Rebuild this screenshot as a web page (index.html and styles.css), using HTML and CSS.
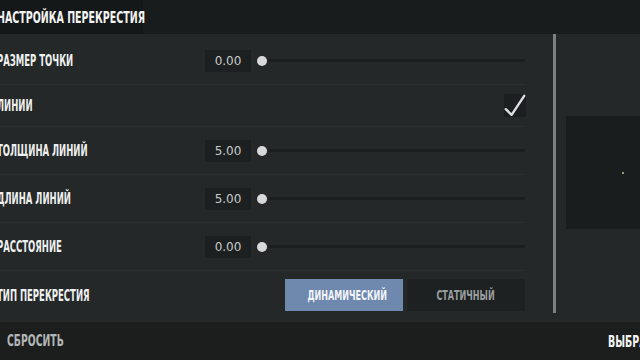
FILE: index.html
```html
<!DOCTYPE html>
<html lang="ru">
<head>
    <meta charset="UTF-8">
    <title>Настройка перекрестия</title>
    <link rel="stylesheet" href="styles.css">
</head>
<body>
    <div id="header">
        <div class="title"><span>НАСТРОЙКА ПЕРЕКРЕСТИЯ</span></div>
    </div>
    <div id="main">
        <div id="settings">
            <div class="row">
                <div class="label">РАЗМЕР ТОЧКИ</div>
                <div class="control">
                    <div class="value">0.00</div>
                    <div class="slider"><span class="thumb"></span><span class="track"></span></div>
                </div>
            </div>
            <div class="row short">
                <div class="label">ЛИНИИ</div>
                <div class="control end">
                    <div class="checkbox">
                        <svg width="22" height="22" viewBox="0 0 22 22">
                            <path d="M1.8 15.2 L7.6 20.8 L20.2 1.8" fill="none" stroke="#dcdee2" stroke-width="2.4" stroke-linecap="round" stroke-linejoin="round"/>
                        </svg>
                    </div>
                </div>
            </div>
            <div class="row">
                <div class="label">ТОЛЩИНА ЛИНИЙ</div>
                <div class="control">
                    <div class="value">5.00</div>
                    <div class="slider"><span class="thumb"></span><span class="track"></span></div>
                </div>
            </div>
            <div class="row">
                <div class="label">ДЛИНА ЛИНИЙ</div>
                <div class="control">
                    <div class="value">5.00</div>
                    <div class="slider"><span class="thumb"></span><span class="track"></span></div>
                </div>
            </div>
            <div class="row">
                <div class="label">РАССТОЯНИЕ</div>
                <div class="control">
                    <div class="value">0.00</div>
                    <div class="slider"><span class="thumb"></span><span class="track"></span></div>
                </div>
            </div>
            <div class="row last">
                <div class="label">ТИП ПЕРЕКРЕСТИЯ</div>
                <div class="control end">
                    <div class="toggle">
                        <div class="option active"><span>ДИНАМИЧЕСКИЙ</span></div>
                        <div class="option"><span>СТАТИЧНЫЙ</span></div>
                    </div>
                </div>
            </div>
        </div>
        <div id="scrollbar"></div>
        <div id="preview">
            <div class="preview-box"><span class="dot"></span></div>
        </div>
    </div>
    <div id="footer">
        <div class="reset">СБРОСИТЬ</div>
        <div class="select">ВЫБРАТЬ</div>
    </div>
</body>
</html>
```

FILE: styles.css
```css
* {
    margin: 0;
    padding: 0;
    box-sizing: border-box;
}

body, html {
    width: 640px;
    height: 360px;
    overflow: hidden;
    background-color: #242828;
    font-family: "DejaVu Sans Condensed", "DejaVu Sans", sans-serif;
    font-weight: bold;
    color: #eceeee;
}

/* the game font is very narrow, so text is squeezed horizontally */
#header {
    height: 34px;
    background-color: #191c1c;
    display: flex;
    align-items: center;
}

.title {
    width: 146px;
    margin-left: -3px;
    height: 34px;
    line-height: 35px;
    background-color: #151818;
    white-space: nowrap;
    font-size: 16px;
    color: #f4f4f4;
}

.title span {
    display: inline-block;
    transform: scaleX(0.66);
    transform-origin: left center;
}

#main {
    display: flex;
    height: 288px;
}

#settings {
    width: 528px;
    margin-left: -3px;
    padding-top: 3px;
}

.row {
    display: flex;
    align-items: center;
    height: 48px;
    border-bottom: 1px solid #2a2e2e;
}

.row.short {
    height: 42px;
}

.row.last {
    border-bottom: none;
}

.label {
    flex: 1;
    white-space: nowrap;
    font-size: 16px;
    color: #eef0f0;
    transform: scaleX(0.59);
    transform-origin: left center;
}

.control {
    width: 320px;
    display: flex;
    align-items: center;
}

.control.end {
    justify-content: flex-end;
}

.value {
    width: 46px;
    height: 22px;
    line-height: 22px;
    text-align: center;
    background-color: #1d2020;
    font-family: "DejaVu Sans", sans-serif;
    font-weight: normal;
    font-size: 12px;
    color: #c8caca;
}

.slider {
    flex: 1;
    display: flex;
    align-items: center;
    padding-left: 6px;
}

.thumb {
    width: 10px;
    height: 10px;
    border-radius: 50%;
    background-color: #d8dada;
}

.track {
    flex: 1;
    height: 3px;
    margin-left: 2px;
    background-color: #1b1e1e;
}

.checkbox {
    width: 22px;
    height: 23px;
    margin-right: -1px;
    background-color: #1c1f1f;
}

.checkbox svg {
    display: block;
    overflow: visible;
}

.toggle {
    display: flex;
    gap: 4px;
}

.option {
    width: 118px;
    height: 32px;
    line-height: 32px;
    text-align: center;
    white-space: nowrap;
    font-size: 14px;
    background-color: #1e2121;
    color: #9a9d9d;
}

.option span {
    display: inline-block;
    transform: scaleX(0.64);
}

.option.active {
    background-color: #6e88ae;
    color: #f2f4f8;
}

#scrollbar {
    width: 3px;
    height: 279px;
    margin-left: 28px;
    background-color: #7c8080;
}

#preview {
    flex: 1;
    padding-left: 10px;
    padding-top: 82px;
}

.preview-box {
    height: 113px;
    background-color: #1a1d1d;
    display: flex;
    padding-left: 56px;
    padding-top: 56px;
}

.dot {
    width: 2px;
    height: 2px;
    background-color: #8aa070;
}

#footer {
    height: 38px;
    background-color: #1c1e1e;
    display: flex;
    align-items: center;
    justify-content: space-between;
    padding-left: 7px;
    overflow: hidden;
}

.reset {
    white-space: nowrap;
    font-size: 15px;
    color: #b2b6b6;
    transform: scaleX(0.69);
    transform-origin: left center;
}

.select {
    width: 60px;
    margin-right: -28px;
    white-space: nowrap;
    font-size: 16px;
    color: #f4f4f4;
    transform: scaleX(0.66);
    transform-origin: left center;
}
```
